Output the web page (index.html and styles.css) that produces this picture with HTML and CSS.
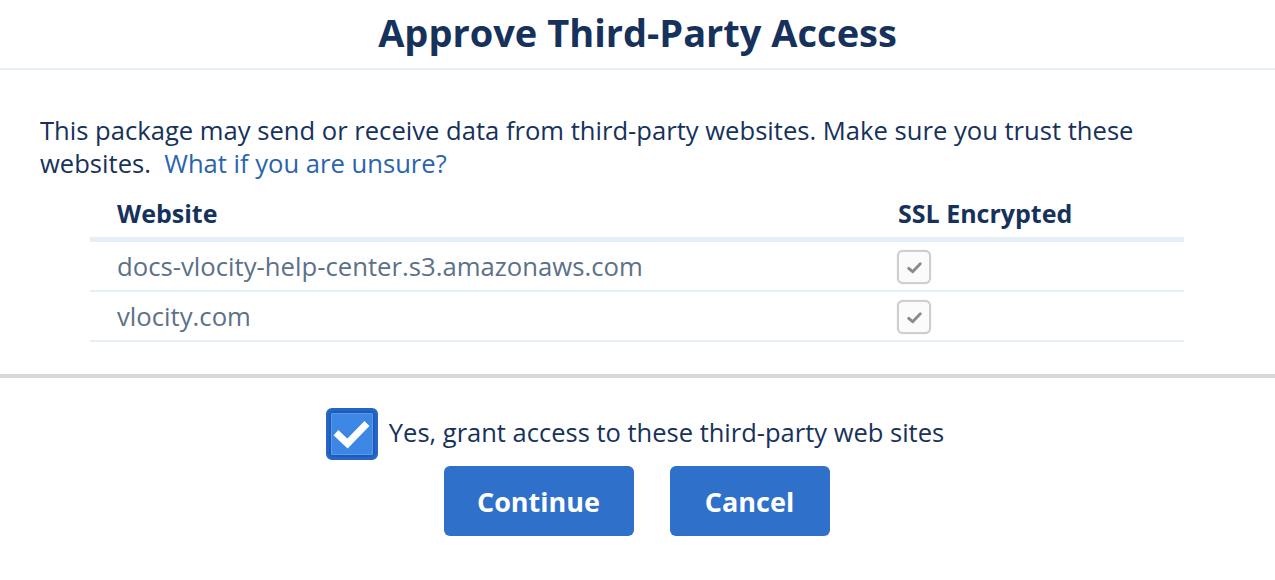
FILE: index.html
```html
<!DOCTYPE html>
<html>
<head>
<meta charset="utf-8">
<link rel="stylesheet" href="styles.css">
</head>
<body>
<div class="dialog">
  <header class="head">
    <h1 class="title">Approve Third-Party Access</h1>
  </header>
  <section class="body">
    <p class="intro"><span class="intro-text">This package may send or receive data from third-party websites. Make sure you trust these websites.&nbsp;</span> <a class="link" href="#">What if you are unsure?</a></p>
    <div class="sites">
      <div class="row row-head">
        <div class="c-site">Website</div>
        <div class="c-ssl">SSL Encrypted</div>
      </div>
      <div class="row">
        <div class="c-site">docs-vlocity-help-center.s3.amazonaws.com</div>
        <div class="c-ssl"><span class="mini-check"><svg viewBox="0 0 16 16"><path d="M3.6 8.6 L6.6 11.2 L12.4 5.2" fill="none" stroke="#8a8a8a" stroke-width="2.2" stroke-linecap="round" stroke-linejoin="round"/></svg></span></div>
      </div>
      <div class="row">
        <div class="c-site">vlocity.com</div>
        <div class="c-ssl"><span class="mini-check"><svg viewBox="0 0 16 16"><path d="M3.6 8.6 L6.6 11.2 L12.4 5.2" fill="none" stroke="#8a8a8a" stroke-width="2.2" stroke-linecap="round" stroke-linejoin="round"/></svg></span></div>
      </div>
    </div>
  </section>
  <footer class="foot">
    <label class="grant">
      <span class="big-check"><svg viewBox="0 0 40 40" width="40" height="40"><path d="M6.5 21 L15.5 29.5 L32.5 12" fill="none" stroke="#fff" stroke-width="7" stroke-linecap="square" stroke-linejoin="miter"/></svg></span>
      <span class="grant-text">Yes, grant access to these third-party web sites</span>
    </label>
    <div class="actions">
      <button class="btn btn-continue">Continue</button>
      <button class="btn btn-cancel">Cancel</button>
    </div>
  </footer>
</div>
</body>
</html>
```

FILE: styles.css
```css
html, body {
  margin: 0;
  padding: 0;
  background: #ffffff;
}
body {
  font-family: "Open Sans", "Noto Sans", sans-serif;
  color: #16325c;
  width: 1275px;
  height: 580px;
  overflow: hidden;
}
.dialog {
  display: flex;
  flex-direction: column;
}
.head {
  height: 68px;
  border-bottom: 2px solid #e6eef6;
  display: flex;
  justify-content: center;
  align-items: center;
}
.title {
  margin: 0;
  font-size: 38px;
  font-weight: 700;
  color: #16325c;
  line-height: 1;
  position: relative;
  top: -2px;
}
.body {
  padding: 44px 40px 32px;
}
.intro {
  margin: 0;
  max-width: 1150px;
  font-size: 25.6px;
  line-height: 33px;
  color: #16325c;
}
.link {
  color: #2a64ad;
  text-decoration: none;
}
.sites {
  margin: 0 51px 0 50px;
  display: flex;
  flex-direction: column;
}
.row {
  display: grid;
  grid-template-columns: 807px 1fr;
  align-items: center;
  height: 48px;
  border-bottom: 2px solid #e6eef6;
  font-size: 25.7px;
  color: #5c7189;
}
.row-head {
  height: 49px;
  padding-top: 8px;
  border-bottom: 5px solid #e6eef6;
  font-size: 25px;
  font-weight: 700;
  color: #16325c;
}
.row .c-site {
  padding-left: 27px;
}
.row .c-ssl {
  display: flex;
  align-items: center;
}
.row-head .c-ssl {
  padding-left: 1px;
}
.mini-check {
  display: flex;
  align-items: center;
  justify-content: center;
  width: 30px;
  height: 30px;
  border: 2px solid #cfcfcf;
  border-radius: 6px;
  background: #fbfbfb;
  box-shadow: 0 0 1px #bdbdbd;
  margin-top: 2px;
}
.mini-check svg {
  width: 21px;
  height: 21px;
}
.foot {
  border-top: 4px solid #d8d8d8;
  display: flex;
  flex-direction: column;
  align-items: center;
  padding-top: 30px;
}
.grant {
  display: flex;
  align-items: center;
  gap: 11px;
  margin-left: -5px;
}
.big-check {
  width: 46px;
  height: 46px;
  border: 3px solid #2566c4;
  border-radius: 6px;
  background: #3c86e4;
  box-shadow: inset 0 0 0 2px #1f5ab8, inset 0 0 0 3px #5a9aea;
  display: flex;
  align-items: center;
  justify-content: center;
}
.grant-text {
  font-size: 25.5px;
  color: #16325c;
  position: relative;
  top: -2px;
}
.actions {
  display: flex;
  gap: 36px;
  margin-top: 6px;
  margin-left: -2px;
}
.btn {
  height: 70px;
  border: none;
  border-radius: 6px;
  background: #2f70cb;
  color: #ffffff;
  font-family: "Open Sans", "Noto Sans", sans-serif;
  font-size: 27px;
  font-weight: 700;
  padding: 0;
  cursor: pointer;
}
.btn-continue { width: 190px; }
.btn-cancel { width: 160px; }
```
